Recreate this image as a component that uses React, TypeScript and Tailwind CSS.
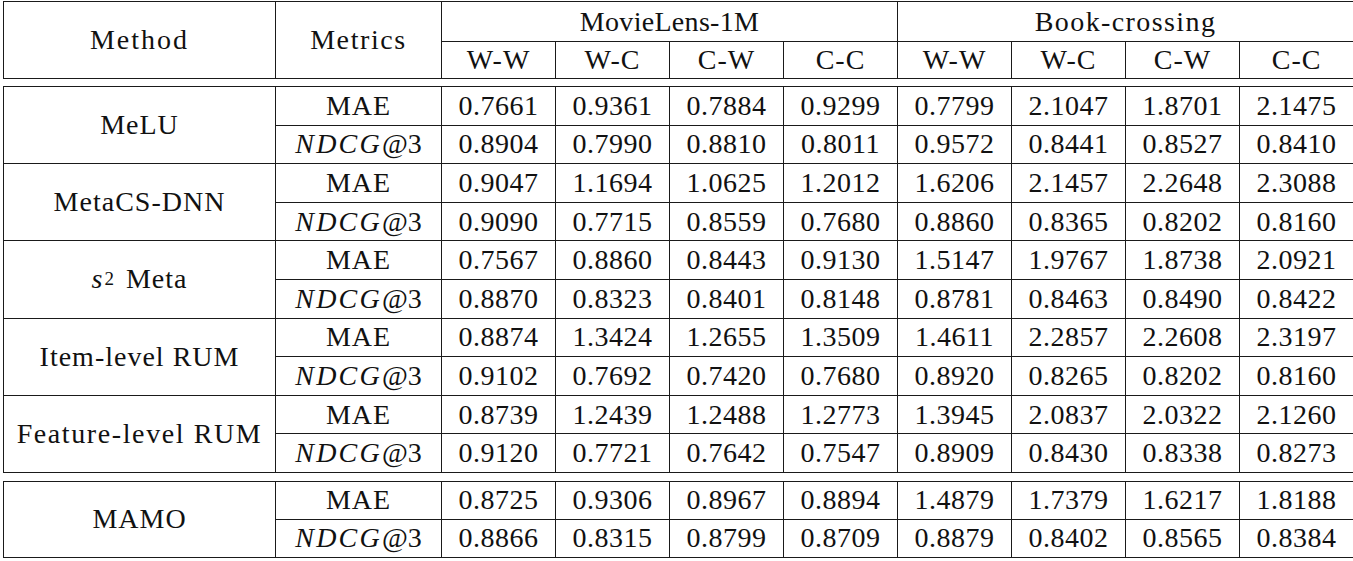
const cols = ["W-W", "W-C", "C-W", "C-C"];

type Row = { method: React.ReactNode; mae: string[]; ndcg: string[] };

const rows: Row[] = [
  {
    method: "MeLU",
    mae: ["0.7661", "0.9361", "0.7884", "0.9299", "0.7799", "2.1047", "1.8701", "2.1475"],
    ndcg: ["0.8904", "0.7990", "0.8810", "0.8011", "0.9572", "0.8441", "0.8527", "0.8410"],
  },
  {
    method: "MetaCS-DNN",
    mae: ["0.9047", "1.1694", "1.0625", "1.2012", "1.6206", "2.1457", "2.2648", "2.3088"],
    ndcg: ["0.9090", "0.7715", "0.8559", "0.7680", "0.8860", "0.8365", "0.8202", "0.8160"],
  },
  {
    method: (
      <>
        <i>s</i>
        <sup className="relative -top-[3px] text-[19px] ml-[1px] mr-[3px]">2</sup> Meta
      </>
    ),
    mae: ["0.7567", "0.8860", "0.8443", "0.9130", "1.5147", "1.9767", "1.8738", "2.0921"],
    ndcg: ["0.8870", "0.8323", "0.8401", "0.8148", "0.8781", "0.8463", "0.8490", "0.8422"],
  },
  {
    method: "Item-level RUM",
    mae: ["0.8874", "1.3424", "1.2655", "1.3509", "1.4611", "2.2857", "2.2608", "2.3197"],
    ndcg: ["0.9102", "0.7692", "0.7420", "0.7680", "0.8920", "0.8265", "0.8202", "0.8160"],
  },
  {
    method: <span className="tracking-[1.6px]">Feature-level RUM</span>,
    mae: ["0.8739", "1.2439", "1.2488", "1.2773", "1.3945", "2.0837", "2.0322", "2.1260"],
    ndcg: ["0.9120", "0.7721", "0.7642", "0.7547", "0.8909", "0.8430", "0.8338", "0.8273"],
  },
];

const mamo: Row = {
  method: "MAMO",
  mae: ["0.8725", "0.9306", "0.8967", "0.8894", "1.4879", "1.7379", "1.6217", "1.8188"],
  ndcg: ["0.8866", "0.8315", "0.8799", "0.8709", "0.8879", "0.8402", "0.8565", "0.8384"],
};

const cell =
  "border-[1.5px] border-[#1a1a1a] text-center p-0 align-middle text-[28px] leading-none text-[#111] [font-family:'Liberation_Serif',serif]";
const table = "w-[1348px] table-fixed border-collapse";

function Cols() {
  return (
    <colgroup>
      <col className="w-[272px]" />
      <col className="w-[166px]" />
      {Array.from({ length: 8 }).map((_, i) => (
        <col key={i} className="w-[114px]" />
      ))}
    </colgroup>
  );
}

function Ndcg() {
  return (
    <>
      <i className="tracking-[2.2px]">NDCG</i>@3
    </>
  );
}

function Group({ r, h = "h-[38.6px]" }: { r: Row; h?: string }) {
  return (
    <>
      <tr className={h}>
        <td rowSpan={2} className={`${cell} tracking-[1px]`}>
          {r.method}
        </td>
        <td className={`${cell} tracking-[1px]`}>MAE</td>
        {r.mae.map((v, i) => (
          <td key={i} className={`${cell} tracking-[0.5px]`}>
            {v}
          </td>
        ))}
      </tr>
      <tr className={h}>
        <td className={cell}>
          <Ndcg />
        </td>
        {r.ndcg.map((v, i) => (
          <td key={i} className={`${cell} tracking-[0.5px]`}>
            {v}
          </td>
        ))}
      </tr>
    </>
  );
}

export default function App() {
  return (
    <div className="w-[1353px] h-[561px] bg-white pl-[3px] pt-[1px] [font-family:'Liberation_Serif',serif]">
      <table className={table}>
        <Cols />
        <tbody>
          <tr className="h-[40px]">
            <td rowSpan={2} className={`${cell} tracking-[2px]`}>
              Method
            </td>
            <td rowSpan={2} className={`${cell} tracking-[1.6px]`}>
              Metrics
            </td>
            <td colSpan={4} className={`${cell} tracking-[0.3px]`}>
              MovieLens-1M
            </td>
            <td colSpan={4} className={`${cell} tracking-[1.4px]`}>
              Book-crossing
            </td>
          </tr>
          <tr className="h-[37px]">
            {[...cols, ...cols].map((c, i) => (
              <td key={i} className={`${cell} tracking-[1px]`}>
                {c}
              </td>
            ))}
          </tr>
        </tbody>
      </table>
      <table className={`mt-[7px] ${table}`}>
        <Cols />
        <tbody>
          {rows.map((r, i) => (
            <Group key={i} r={r} />
          ))}
        </tbody>
      </table>
      <table className={`mt-[8px] ${table}`}>
        <Cols />
        <tbody>
          <Group r={mamo} h="h-[38px]" />
        </tbody>
      </table>
    </div>
  );
}
